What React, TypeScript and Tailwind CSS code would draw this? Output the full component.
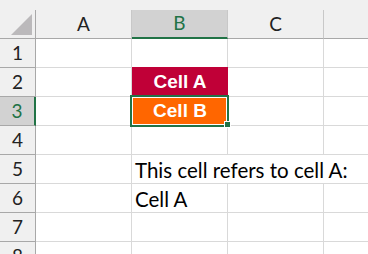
import React from "react";

const cols = ["A", "B", "C", "D"];
const rows = [1, 2, 3, 4, 5, 6, 7, 8];

const font = { fontFamily: "Lato, 'Open Sans', sans-serif" };

const Cell: React.FC<{ row: number; col: string }> = ({ row, col }) => {
   if (col === "B" && row === 2) {
      return (
         <div className="flex items-center justify-center bg-[#c00037] text-white font-bold text-[19px] font-['Liberation_Sans',Arial,sans-serif] -mt-px">
            Cell A
         </div>
      );
   }
   if (col === "B" && row === 3) {
      return (
         <div className="flex items-center justify-center bg-[#ff6600] text-white font-bold text-[19px] font-['Liberation_Sans',Arial,sans-serif] -mt-px">
            Cell B
         </div>
      );
   }
   let text = "";
   if (col === "B" && row === 5) text = "This cell refers to cell A:";
   if (col === "B" && row === 6) text = "Cell A";
   // text spilling over hides the grid lines on its right
   const spill = row === 5 && (col === "B" || col === "C");
   return (
      <div className={`flex items-end pl-[3px] pb-[3px] border-b border-[#d9d9d9] ${spill ? "" : "border-r"}`}>
         {text && (
            <span className="relative z-10 whitespace-nowrap text-[20.5px] leading-none text-black" style={font}>
               {text}
            </span>
         )}
      </div>
   );
};

export default function App() {
   return (
      <div className="relative w-[368px] h-[254px] overflow-hidden bg-white" style={font}>
         <div className="h-[10px] bg-[#f0f0f0]" />
         <div className="grid grid-cols-[36px_96px_96px_96px_1fr] grid-rows-[29px] auto-rows-[29px]">
            {/* header row */}
            <div className="flex items-end justify-end pr-[3px] pb-[3px] bg-[#f0f0f0] border-r border-b border-[#a8a8a8]">
               <div className="w-[21px] h-[21px] bg-[#bbb9bb] [clip-path:polygon(100%_0,100%_100%,0_100%)]" />
            </div>
            {cols.map((c) => (
               <div
                  key={c}
                  className={
                     c === "B"
                        ? "flex items-center justify-center bg-[#d2d2d2] text-[#217346] text-[19px] border-r border-[#c8c8c8] border-b-2 border-b-[#217346]"
                        : "flex items-center justify-center bg-[#f0f0f0] text-[#222] text-[19px] border-r border-[#c8c8c8] border-b border-b-[#a8a8a8]"
                  }>
                  {c === "D" ? <span className="ml-[86px]">{c}</span> : c}
               </div>
            ))}
            {rows.map((r) => (
               <React.Fragment key={r}>
                  <div
                     className={
                        r === 3
                           ? "flex items-center justify-center bg-[#d2d2d2] text-[#217346] text-[19px] border-r-2 border-[#217346] border-b border-b-[#a8a8a8]"
                           : "flex items-center justify-center bg-[#f0f0f0] text-[#222] text-[19px] border-r border-[#a8a8a8] border-b"
                     }>
                     {r}
                  </div>
                  {cols.map((c) => (
                     <Cell key={c} row={r} col={c} />
                  ))}
               </React.Fragment>
            ))}
         </div>
         {/* selection around B3 */}
         <div className="absolute left-[130px] top-[95px] w-[99px] h-[32px] border-2 border-[#217346]">
            <div className="w-full h-full border border-white" />
         </div>
         <div className="absolute left-[224px] top-[121px] w-[7px] h-[7px] bg-[#217346] border border-white" />
      </div>
   );
}
